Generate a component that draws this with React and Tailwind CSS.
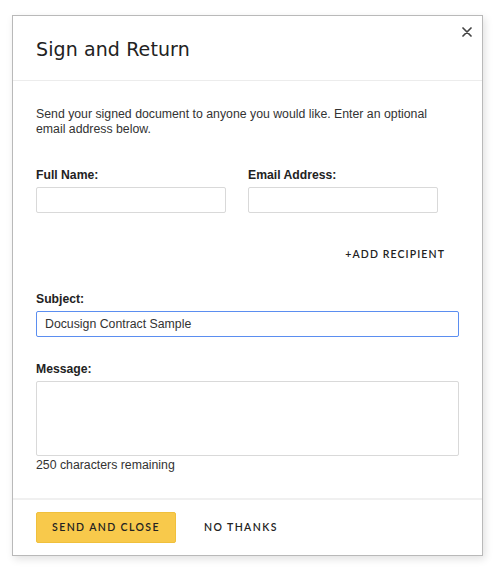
import React from 'react';

const body = { fontFamily: '"Liberation Sans", Arial, sans-serif' };
const caps = { fontFamily: 'Lato, "Liberation Sans", sans-serif' };

function Label({ children }) {
  return <div className="text-[12.2px] leading-[16px] font-bold text-[#222] mb-[4px]">{children}</div>;
}

export default function App() {
  return (
    <div className="w-[500px] h-[569px] bg-white pt-[15px] pl-[12px]" style={body}>
      <div className="relative w-[471px] h-[541px] flex flex-col border border-[#b9b9b9] bg-white shadow-[2px_3px_8px_rgba(0,0,0,0.12)]">
        <button className="absolute top-[7px] right-[6px] p-1 text-[#444]">
          <svg width="10" height="10" viewBox="0 0 10 10">
            <path d="M1 1 L9 9 M9 1 L1 9" stroke="currentColor" strokeWidth="1.7" strokeLinecap="round" />
          </svg>
        </button>

        <div className="h-[65px] shrink-0 flex items-center px-[23px] border-b border-[#ececec]">
          <h2
            className="text-[19px] text-[#222] tracking-[0.1px] pt-[3px]"
            style={{ fontFamily: '"DejaVu Sans", "Noto Sans", sans-serif' }}
          >
            Sign and Return
          </h2>
        </div>

        <div className="flex-1 px-[23px] pt-[26px]">
          <p className="text-[12.3px] leading-[15px] text-[#333]">
            Send your signed document to anyone you would like. Enter an optional email address below.
          </p>

          <div className="flex gap-[22px] mt-[30px]">
            <div className="w-[190px]">
              <Label>Full Name:</Label>
              <input className="w-full h-[26px] border border-[#d9d9d9] rounded-[2px] outline-none" />
            </div>
            <div className="w-[190px]">
              <Label>Email Address:</Label>
              <input className="w-full h-[26px] border border-[#d9d9d9] rounded-[2px] outline-none" />
            </div>
          </div>

          <div className="flex justify-end pr-[14px] mt-[34px]">
            <span className="text-[10.5px] leading-[14px] tracking-[1.1px] font-semibold text-[#222]" style={caps}>
              +ADD RECIPIENT
            </span>
          </div>

          <div className="mt-[30px]">
            <Label>Subject:</Label>
            <div className="w-full h-[26px] border-[1.5px] border-[#5b8ef0] rounded-[2px] flex items-center px-[8px] text-[12.3px] text-[#333]">
              Docusign Contract Sample
            </div>
          </div>

          <div className="mt-[24px]">
            <Label>Message:</Label>
            <textarea className="block w-full h-[75px] border border-[#d9d9d9] rounded-[2px] outline-none resize-none" />
            <div className="mt-[2px] text-[12.3px] leading-[15px] text-[#333]">250 characters remaining</div>
          </div>
        </div>

        <div className="h-[57px] shrink-0 border-t-2 border-[#f0f0f0] flex items-center px-[23px] gap-[28px]">
          <button
            className="w-[140px] h-[31px] bg-[#f8c94b] border border-[#f0c03c] rounded-[2px] text-[10.5px] font-semibold tracking-[1.4px] text-[#222]"
            style={caps}
          >
            SEND AND CLOSE
          </button>
          <button className="text-[10.5px] font-semibold tracking-[1.4px] text-[#222]" style={caps}>
            NO THANKS
          </button>
        </div>
      </div>
    </div>
  );
}
